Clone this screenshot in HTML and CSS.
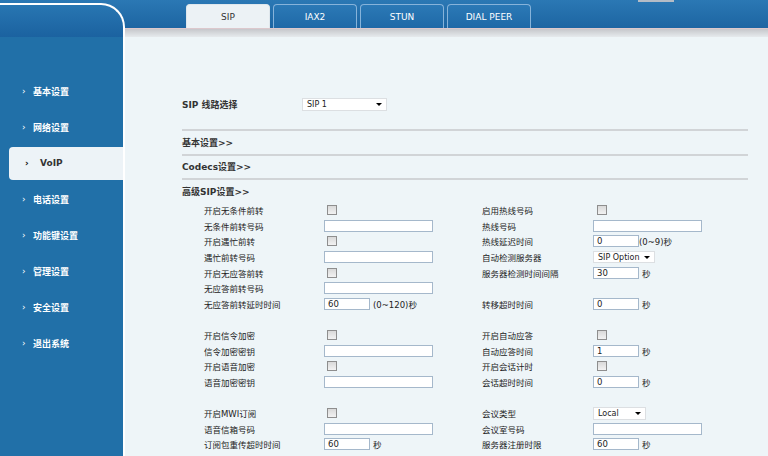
FILE: index.html
```html
<!DOCTYPE html>
<html lang="zh-CN">
<head>
<meta charset="utf-8">
<title>VoIP - SIP</title>
<link rel="stylesheet" href="styles.css">
</head>
<body>
<div class="page">
  <aside class="sidebar">
    <ul class="menu">
      <li class="item"><span class="chev">›</span>基本设置</li>
      <li class="item"><span class="chev">›</span>网络设置</li>
      <li class="item active"><span class="chev">›</span>VoIP</li>
      <li class="item"><span class="chev">›</span>电话设置</li>
      <li class="item"><span class="chev">›</span>功能键设置</li>
      <li class="item"><span class="chev">›</span>管理设置</li>
      <li class="item"><span class="chev">›</span>安全设置</li>
      <li class="item"><span class="chev">›</span>退出系统</li>
    </ul>
  </aside>
  <div class="col">
    <div class="topbar">
      <div class="tabs">
        <div class="tab active">SIP</div>
        <div class="tab">IAX2</div>
        <div class="tab">STUN</div>
        <div class="tab">DIAL PEER</div>
      </div>
      <div class="cutbtn"></div>
    </div>
    <div class="band"></div>
    <main class="main">
      <div class="linesel">
        <div class="lbl-b">SIP 线路选择</div>
        <div class="select sel-line"><span>SIP 1</span><span class="arrow"></span></div>
      </div>
      <div class="sections">
        <div class="sec">基本设置&gt;&gt;</div>
        <div class="sec">Codecs设置&gt;&gt;</div>
        <div class="sec">高级SIP设置&gt;&gt;</div>
      </div>
      <div class="form">
        <div class="l">开启无条件前转</div><div class="v"><span class="cb"></span></div>
        <div class="l">启用热线号码</div><div class="v"><span class="cb cb-r"></span></div>

        <div class="l">无条件前转号码</div><div class="v"><span class="in long"></span></div>
        <div class="l">热线号码</div><div class="v"><span class="in long"></span></div>

        <div class="l">开启遇忙前转</div><div class="v"><span class="cb"></span></div>
        <div class="l">热线延迟时间</div><div class="v"><span class="in short">0</span><span class="suf tight">(0~9)秒</span></div>

        <div class="l">遇忙前转号码</div><div class="v"><span class="in long"></span></div>
        <div class="l">自动检测服务器</div><div class="v"><span class="select sel-opt"><span>SIP Option</span><span class="arrow"></span></span></div>

        <div class="l">开启无应答前转</div><div class="v"><span class="cb"></span></div>
        <div class="l">服务器检测时间间隔</div><div class="v"><span class="in short">30</span><span class="suf">秒</span></div>

        <div class="l">无应答前转号码</div><div class="v"><span class="in long"></span></div>
        <div class="l"></div><div class="v"></div>

        <div class="l">无应答前转延时时间</div><div class="v"><span class="in short">60</span><span class="suf">(0~120)秒</span></div>
        <div class="l">转移超时时间</div><div class="v"><span class="in short">0</span><span class="suf">秒</span></div>

        <div class="l"></div><div class="v"></div><div class="l"></div><div class="v"></div>

        <div class="l">开启信令加密</div><div class="v"><span class="cb"></span></div>
        <div class="l">开启自动应答</div><div class="v"><span class="cb cb-r"></span></div>

        <div class="l">信令加密密钥</div><div class="v"><span class="in long"></span></div>
        <div class="l">自动应答时间</div><div class="v"><span class="in short">1</span><span class="suf">秒</span></div>

        <div class="l">开启语音加密</div><div class="v"><span class="cb"></span></div>
        <div class="l">开启会话计时</div><div class="v"><span class="cb cb-r"></span></div>

        <div class="l">语音加密密钥</div><div class="v"><span class="in long"></span></div>
        <div class="l">会话超时时间</div><div class="v"><span class="in short">0</span><span class="suf">秒</span></div>

        <div class="l"></div><div class="v"></div><div class="l"></div><div class="v"></div>

        <div class="l">开启MWI订阅</div><div class="v"><span class="cb"></span></div>
        <div class="l">会议类型</div><div class="v"><span class="select sel-local"><span>Local</span><span class="arrow"></span></span></div>

        <div class="l">语音信箱号码</div><div class="v"><span class="in long"></span></div>
        <div class="l">会议室号码</div><div class="v"><span class="in long"></span></div>

        <div class="l">订阅包重传超时时间</div><div class="v"><span class="in short">60</span><span class="suf">秒</span></div>
        <div class="l">服务器注册时限</div><div class="v"><span class="in short">60</span><span class="suf">秒</span></div>
      </div>
    </main>
  </div>
</div>
</body>
</html>
```
FILE: styles.css
```css
html, body {
  margin: 0;
  height: 100%;
  overflow: hidden;
}
body {
  background: #eef5f8;
  font-family: "DejaVu Sans", "Noto Sans CJK SC", sans-serif;
}
.page {
  display: flex;
  height: 456px;
  background: linear-gradient(to bottom, #2b78b4 0, #1d65a2 28px, #eef5f8 28px);
}

/* sidebar */
.sidebar {
  box-sizing: border-box;
  width: 125px;
  flex: none;
  margin-top: 3px;
  border-top: 2px solid #fff;
  border-right: 2px solid #fff;
  border-top-right-radius: 24px;
  background: linear-gradient(to bottom, #2876b2 0, #1b62a0 32px, #2170a8 32px);
  padding-top: 69.5px;
}
.menu {
  list-style: none;
  margin: 0;
  padding: 0;
}
.item {
  height: 33px;
  margin-bottom: 3px;
  display: flex;
  align-items: center;
  padding-left: 22px;
  color: #fff;
  font-weight: bold;
  font-size: 9px;
}
.chev {
  width: 11px;
  font-weight: normal;
  font-size: 9px;
}
.item.active {
  margin-left: 9px;
  padding-left: 16px;
  background: #edf3f7;
  color: #333;
  border-radius: 4px 0 0 4px;
}
.item.active .chev {
  width: 15px;
  font-weight: bold;
  color: #111;
}

/* right column */
.col {
  flex: 1;
  min-width: 0;
  display: flex;
  flex-direction: column;
}
.topbar {
  height: 28px;
  flex: none;
  display: flex;
  align-items: flex-end;
  background: linear-gradient(to bottom, #2b78b4, #1d65a2);
}
.tabs {
  display: flex;
  gap: 3px;
  margin-left: 61px;
}
.tab {
  box-sizing: border-box;
  width: 84px;
  height: 24px;
  border: 1px solid #86b3da;
  border-bottom: none;
  border-radius: 4px 4px 0 0;
  background: linear-gradient(to bottom, #2b79b6, #1f69a7);
  color: #fff;
  font-size: 9px;
  display: flex;
  align-items: center;
  justify-content: center;
}
.tab.active {
  background: #ecf2f5;
  border-color: #dfe7ec;
  color: #333;
}
.cutbtn {
  align-self: flex-start;
  width: 36px;
  height: 2px;
  background: #b4bcc6;
  margin-left: auto;
  margin-right: 94px;
}
.band {
  height: 9px;
  flex: none;
  background: linear-gradient(to bottom, #dcc8cc 0, #dcc8cc 1px, #c6c7cb 1px, #e6eaed 100%);
}
.main {
  flex: 1;
  padding: 61px 20px 0 57px;
}

.linesel {
  display: flex;
  align-items: center;
  height: 13px;
}
.lbl-b {
  width: 120px;
  font-weight: bold;
  font-size: 9px;
  color: #333;
}
.select {
  box-sizing: border-box;
  height: 13px;
  border: 1px solid #dcdfe2;
  background: #fff;
  display: flex;
  align-items: center;
  padding-left: 4px;
  font-size: 8px;
  color: #222;
}
.sel-line { width: 85px; }
.sel-opt { width: 62px; height: 12px; }
.sel-local { width: 53px; height: 13px; }
.arrow {
  margin-left: auto;
  margin-right: 4px;
  width: 0;
  height: 0;
  border-left: 3px solid transparent;
  border-right: 3px solid transparent;
  border-top: 3.5px solid #000;
}

.sections {
  margin-top: 18px;
}
.sec {
  border-top: 2px solid #d1d4d7;
  height: 22.5px;
  display: flex;
  align-items: center;
  font-weight: bold;
  font-size: 9px;
  color: #333;
}

.form {
  display: grid;
  grid-template-columns: 120px 158px 111px 1fr;
  grid-auto-rows: 15.6px;
  align-items: center;
  margin-left: 22px;
  font-size: 8.5px;
  color: #222;
}
.l {
  white-space: nowrap;
}
.v {
  display: flex;
  align-items: center;
  white-space: nowrap;
}
.cb {
  box-sizing: border-box;
  width: 10px;
  height: 10px;
  border: 1px solid #8e8e8e;
  background: linear-gradient(to bottom, #d9d9d9, #f2f2f2);
  margin-left: 3px;
}
.cb-r {
  margin-left: 4px;
}
.in {
  box-sizing: border-box;
  height: 12px;
  border: 1px solid #a5b8cb;
  background: #fff;
  font-size: 8.5px;
  padding-left: 3px;
  display: flex;
  align-items: center;
  color: #222;
}
.long { width: 109px; }
.short { width: 46px; }
.suf {
  margin-left: 3px;
}
.suf.tight {
  margin-left: 0;
}
```
